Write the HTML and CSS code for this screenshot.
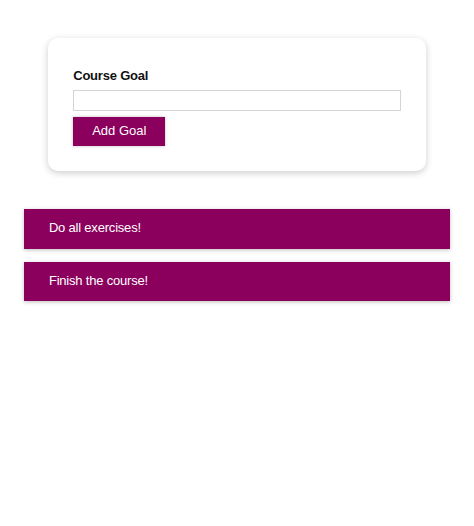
FILE: index.html
```html
<!DOCTYPE html>
<html lang="en">
<head>
<meta charset="utf-8">
<title>Course Goals</title>
<link rel="stylesheet" href="styles.css">
</head>
<body>
  <section class="goal-form">
    <form>
      <div class="form-control">
        <label for="goal">Course Goal</label>
        <input type="text" id="goal">
      </div>
      <button type="submit" class="button">Add Goal</button>
    </form>
  </section>
  <section class="goals">
    <ul class="goal-list">
      <li class="goal-item">Do all exercises!</li>
      <li class="goal-item">Finish the course!</li>
    </ul>
  </section>
</body>
</html>
```

FILE: styles.css
```css
* { box-sizing: border-box; }
html {
  font-size: 12.6px;
  font-family: "Liberation Sans", Arial, sans-serif;
}
body {
  margin: 0;
  background: #ffffff;
  font-size: 13px;
  line-height: 14.5px;
  letter-spacing: -0.2px;
}
.goal-form {
  width: 30rem;
  max-width: 90%;
  margin: 38px auto;
  padding: 2rem;
  border-radius: 10px;
  background: #fff;
  box-shadow: 0 2px 7px rgba(0, 0, 0, 0.2);
}
.goal-form form { margin: 0; }
.form-control {
  margin: 6px 0;
}
.form-control label {
  font-weight: bold;
  display: block;
  margin-bottom: 6px;
  color: #111;
}
.form-control input {
  display: block;
  width: 100%;
  height: 21px;
  border: 1px solid #d4d4d4;
  font: inherit;
  padding: 0 0.25rem;
  margin: 0;
}
.button {
  font: inherit;
  height: 29px;
  padding: 0 18px;
  border: 1px solid #8b005d;
  color: #fff;
  background: #8b005d;
  box-shadow: 0 0 3px rgba(0, 0, 0, 0.26);
  cursor: pointer;
  margin: 0;
}
.goals {
  width: 35rem;
  max-width: 90%;
  margin: 38px auto;
}
.goal-list {
  list-style: none;
  margin: 0;
  padding: 0;
}
.goal-item {
  margin: 13px 0;
  background: #8b005d;
  color: #fff;
  padding: 1rem 2rem;
  box-shadow: 0 1px 4px rgba(0, 0, 0, 0.26);
}
```
